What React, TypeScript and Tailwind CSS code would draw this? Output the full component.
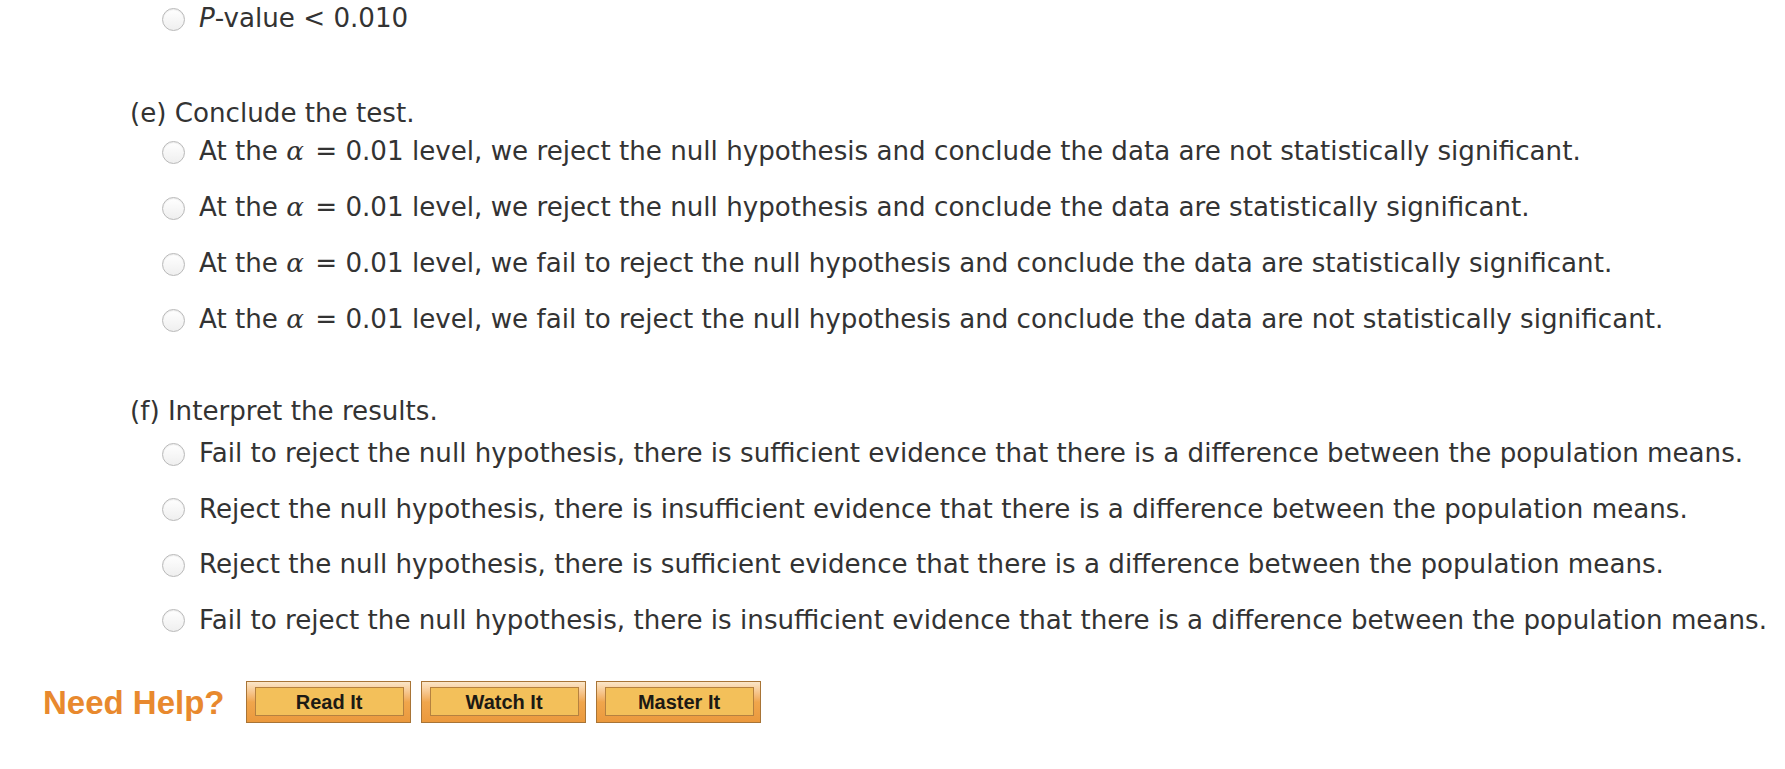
import type { ReactNode } from "react";

const conclude = [
  "level, we reject the null hypothesis and conclude the data are not statistically significant.",
  "level, we reject the null hypothesis and conclude the data are statistically significant.",
  "level, we fail to reject the null hypothesis and conclude the data are statistically significant.",
  "level, we fail to reject the null hypothesis and conclude the data are not statistically significant.",
];

const interpret = [
  "Fail to reject the null hypothesis, there is sufficient evidence that there is a difference between the population means.",
  "Reject the null hypothesis, there is insufficient evidence that there is a difference between the population means.",
  "Reject the null hypothesis, there is sufficient evidence that there is a difference between the population means.",
  "Fail to reject the null hypothesis, there is insufficient evidence that there is a difference between the population means.",
];

function Radio() {
  return (
    <span className="w-[23px] h-[23px] shrink-0 rounded-full border border-[#b9b9b9] bg-gradient-to-b from-white to-[#efefef] shadow-[inset_0_1px_1px_rgba(0,0,0,0.08)]" />
  );
}

function Option({ children }: { children: ReactNode }) {
  return (
    <div className="flex items-center h-[38px] pl-[162px] gap-[14px]">
      <Radio />
      <span className="whitespace-nowrap">{children}</span>
    </div>
  );
}

function Alpha() {
  return (
    <>
      At the{" "}
      <span className="italic font-['DejaVu_Serif',serif] mr-[3px]">α</span> ={" "}
      0.01{" "}
    </>
  );
}

function HelpButton({ label }: { label: string }) {
  return (
    <button className="w-[165px] h-[42px] border border-[#a87436] bg-gradient-to-b from-[#fbe6c8] via-[#f0a64c] to-[#eb993d] pt-[5px] pb-[6px] pl-[8px] pr-[6px] flex">
      <span className="flex-1 flex items-center justify-center border border-[#b5813f] bg-[#f3c05a] text-[20px] font-bold text-[#1c1a14] font-['Liberation_Sans',Arial,sans-serif]">
        {label}
      </span>
    </button>
  );
}

export default function App() {
  return (
    <div className="w-[1785px] h-[769px] bg-white text-[#333333] text-[26.15px] font-['DejaVu_Sans',Verdana,sans-serif] overflow-hidden">
      <Option>
        <span className="italic">P</span>-value &lt; 0.010
      </Option>

      <div className="mt-[57px] h-[38px] flex items-center pl-[130px]">(e) Conclude the test.</div>
      <div className="flex flex-col gap-[18px]">
        {conclude.map((t) => (
          <Option key={t}>
            <Alpha />
            {t}
          </Option>
        ))}
      </div>

      <div className="mt-[54px] h-[38px] flex items-center pl-[130px]">(f) Interpret the results.</div>
      <div className="flex flex-col gap-[17.5px] mt-[4px]">
        {interpret.map((t) => (
          <Option key={t}>{t}</Option>
        ))}
      </div>

      <div className="mt-[38px] flex items-center pl-[43px]">
        <span className="text-[33px] font-bold text-[#e8892e] font-['Liberation_Sans',Arial,sans-serif] mr-[21px]">
          Need Help?
        </span>
        <div className="flex gap-[10px]">
          <HelpButton label="Read It" />
          <HelpButton label="Watch It" />
          <HelpButton label="Master It" />
        </div>
      </div>
    </div>
  );
}
